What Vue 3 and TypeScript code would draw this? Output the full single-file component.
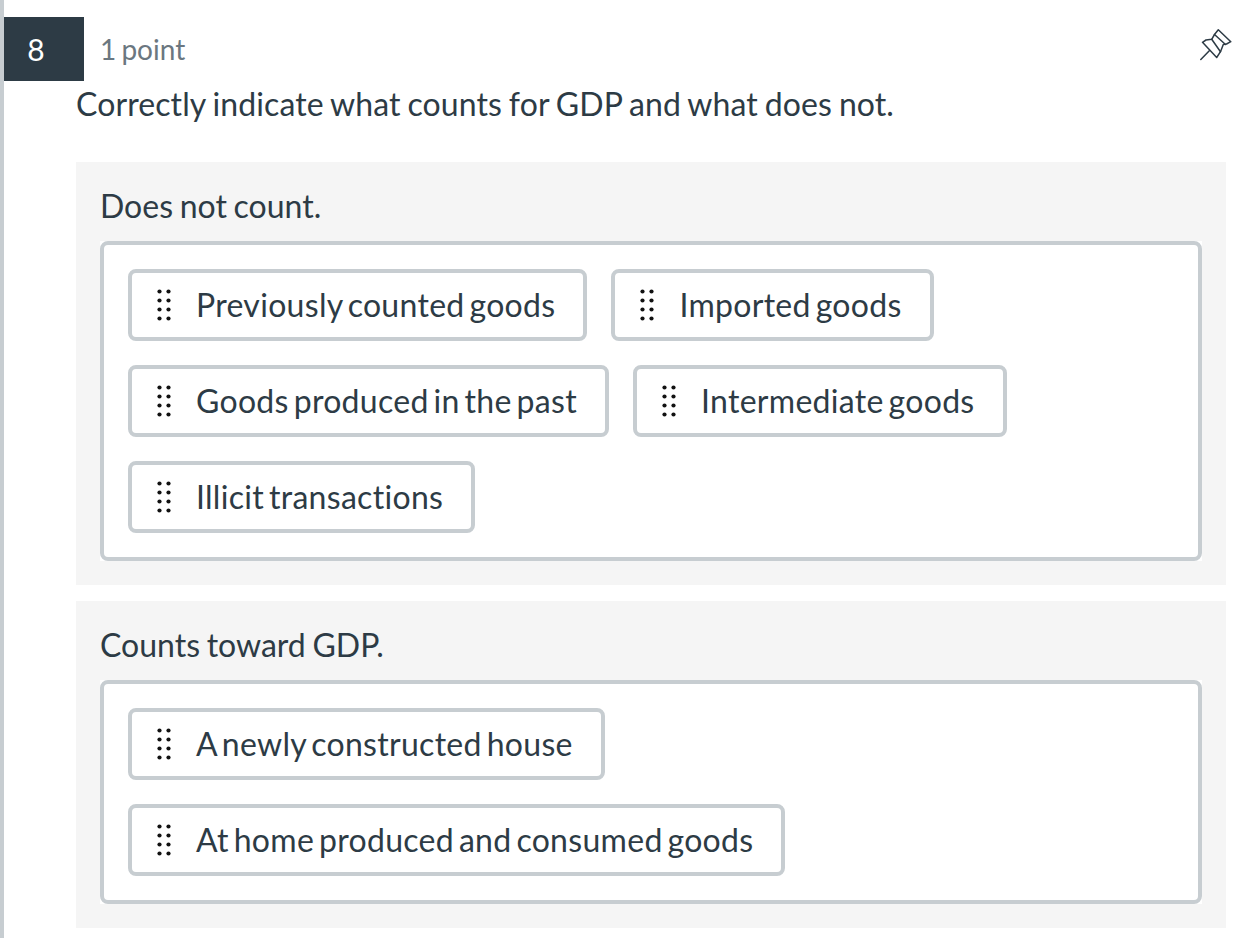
<script setup lang="ts">
interface Group { title: string; items: string[] }
const groups: Group[] = [
  { title: 'Does not count.', items: ['Previously counted goods', 'Imported goods', 'Goods produced in the past', 'Intermediate goods', 'Illicit transactions'] },
  { title: 'Counts toward GDP.', items: ['A newly constructed house', 'At home produced and consumed goods'] },
]
const rows = [2.5, 11.5, 20.5, 29.5]
</script>

<template>
  <div class="page">
    <div class="head">
      <div class="badge">8</div>
      <div class="points">1 point</div>
      <svg class="pin" width="32" height="32" viewBox="0 0 32 32" fill="none" stroke="#2d3b45" stroke-width="1.5" stroke-linejoin="round" stroke-linecap="round">
        <path d="M0.800 30.500 L9.300 21.700" />
        <path d="M2.500 13.300 L6 11 L11.700 10.300 L14.500 5.500 L18.300 0.800 L30.800 12.700 L26.500 15 L23.300 15.500 L20.500 22.700 L16.700 28.500 Z" />
        <path d="M11.700 10.300 L20.500 22.700 M14.500 5.500 L25.500 15.500" />
      </svg>
    </div>
    <div class="question">Correctly indicate what counts for GDP and what does not.</div>
    <div class="groups">
      <section v-for="g in groups" :key="g.title" class="group">
        <h3 class="title">{{ g.title }}</h3>
        <div class="backing">
          <div class="box">
            <div v-for="item in g.items" :key="item" class="chip">
              <svg class="dots" width="14" height="32" viewBox="0 0 14 32" fill="#111">
                <template v-for="y in rows" :key="y">
                  <circle cx="2.500" :cy="y" r="2.100" />
                  <circle cx="11.500" :cy="y" r="2.100" />
                </template>
              </svg>
              <span class="label">{{ item }}</span>
            </div>
          </div>
        </div>
      </section>
    </div>
  </div>
</template>

<style>
html, body { margin: 0; background: #fff; }
</style>

<style scoped>
.page {
  box-sizing: border-box;
  width: 1244px;
  height: 938px;
  overflow: hidden;
  border-left: 4px solid #c7cdd1;
  padding-top: 17px;
  font-family: Lato, "Liberation Sans", sans-serif;
  color: #2d3b45;
  background: #fff;
}
.head {
  display: flex;
  align-items: center;
  height: 64px;
  padding-right: 12px;
}
.badge {
  width: 80px;
  height: 64px;
  box-sizing: border-box;
  padding-right: 16px;
  background: #2d3b45;
  color: #fff;
  font-size: 30px;
  line-height: 64px;
  text-align: center;
}
.points {
  margin-left: 16px;
  flex: 1;
  font-size: 28px;
  word-spacing: -2px;
  color: #6b7780;
}
.pin { display: block; margin-top: -8px; }
.question {
  margin: -1px 0 0 72px;
  font-size: 32px;
  line-height: 48px;
  letter-spacing: 0.1px;
  word-spacing: -1.4px;
}
.groups {
  margin: 34px 18px 0 72px;
  display: flex;
  flex-direction: column;
  gap: 16px;
}
.group {
  background: #f5f5f5;
  padding: 24px;
}
.title {
  margin: -1px 0 15px;
  font-size: 32px;
  font-weight: 400;
  line-height: 41px;
  word-spacing: -1.5px;
}
.backing { background: #fff; }
.box {
  display: flex;
  flex-wrap: wrap;
  gap: 24px;
  padding: 24px;
  border: 4px solid #c7cdd1;
  border-radius: 8px;
}
.chip {
  display: flex;
  align-items: center;
  box-sizing: border-box;
  height: 72px;
  padding: 0 28px 0 25px;
  border: 4px solid #c7cdd1;
  border-radius: 8px;
  background: #fff;
  font-size: 32px;
  white-space: nowrap;
  letter-spacing: 0.3px;
  word-spacing: -3.6px;
}
.label { padding-bottom: 2px; }
.dots { display: block; margin-right: 25px; flex: none; }
</style>
